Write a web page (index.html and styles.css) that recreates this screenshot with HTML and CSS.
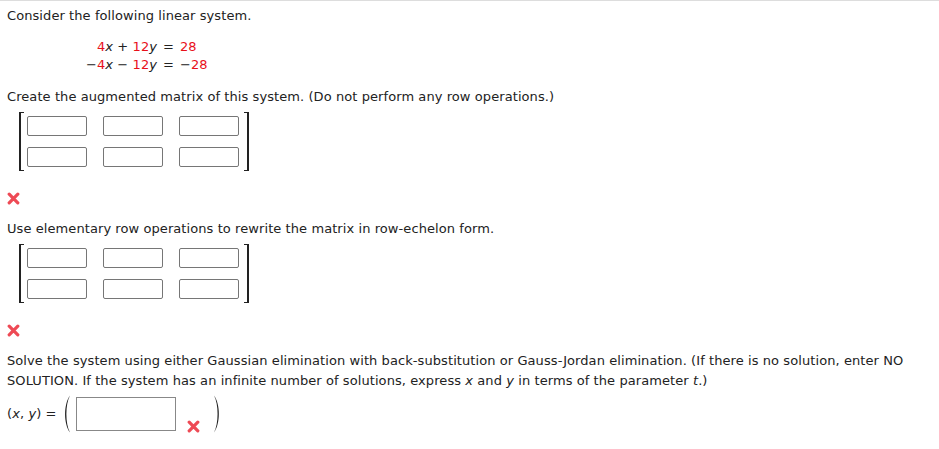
FILE: index.html
```html
<!DOCTYPE html>
<html lang="en">

<head>
    <meta charset="UTF-8">
    <meta name="viewport" content="width=device-width, initial-scale=1.0">
    <title>Linear system</title>
    <link rel="stylesheet" href="styles.css">
</head>

<body>
    <div class="question">
        <p class="intro">Consider the following linear system.</p>

        <table class="system">
            <tr>
                <td class="lhs"><span class="num">4</span><i>x</i> + <span class="num">12</span><i>y</i></td>
                <td class="eq">=</td>
                <td class="rhs"><span class="num">28</span></td>
            </tr>
            <tr>
                <td class="lhs">&minus;<span class="num">4</span><i>x</i> &minus; <span class="num">12</span><i>y</i></td>
                <td class="eq">=</td>
                <td class="rhs">&minus;<span class="num">28</span></td>
            </tr>
        </table>

        <p class="part">Create the augmented matrix of this system. (Do not perform any row operations.)</p>
        <div class="matrix">
            <span class="bracket left"></span>
            <div class="cells">
                <input type="text"><input type="text"><input type="text">
                <input type="text"><input type="text"><input type="text">
            </div>
            <span class="bracket right"></span>
        </div>
        <div class="mark">
            <svg width="13" height="13" viewBox="0 0 13 13"><path d="M2.2 2.2 L10.8 10.8 M10.8 2.2 L2.2 10.8" /></svg>
        </div>

        <p class="part">Use elementary row operations to rewrite the matrix in row-echelon form.</p>
        <div class="matrix">
            <span class="bracket left"></span>
            <div class="cells">
                <input type="text"><input type="text"><input type="text">
                <input type="text"><input type="text"><input type="text">
            </div>
            <span class="bracket right"></span>
        </div>
        <div class="mark">
            <svg width="13" height="13" viewBox="0 0 13 13"><path d="M2.2 2.2 L10.8 10.8 M10.8 2.2 L2.2 10.8" /></svg>
        </div>

        <p class="part solve">Solve the system using either Gaussian elimination with back-substitution or Gauss-Jordan elimination. (If there is no solution, enter NO SOLUTION. If the system has an infinite number of solutions, express <i>x</i> and <i>y</i> in terms of the parameter <i>t</i>.)</p>
        <div class="answer">
            <span class="label">(<i>x</i>, <i>y</i>) =</span>
            <svg class="paren" width="8" height="38" viewBox="0 0 8 38"><path d="M7 0.5 C0.5 9 0.5 29 7 37.5 C2.2 29 2.2 9 7 0.5 Z" /></svg>
            <input type="text" class="wide">
            <svg class="small-mark" width="13" height="13" viewBox="0 0 13 13"><path d="M2.2 2.2 L10.8 10.8 M10.8 2.2 L2.2 10.8" /></svg>
            <svg class="paren" width="8" height="38" viewBox="0 0 8 38"><path d="M1 0.5 C7.5 9 7.5 29 1 37.5 C5.8 29 5.8 9 1 0.5 Z" /></svg>
        </div>
    </div>
</body>

</html>
```

FILE: styles.css
```css
body {
    margin: 0;
    font-family: 'DejaVu Sans', Verdana, sans-serif;
    font-size: 13px;
    letter-spacing: 0.08px;
    line-height: 20px;
    color: #222;
    background-color: #fff;
    border-top: 1px solid #ddd;
}

.question {
    padding: 0 7px;
}

p {
    margin: 0;
}

.intro {
    margin-top: 5px;
}

/* the two equations */
.system {
    margin: 12px 0 0 79px;
    border-collapse: collapse;
}

.system td {
    padding: 0;
    line-height: 18px;
    white-space: nowrap;
}

.system .lhs {
    text-align: right;
}

.system .eq {
    padding: 0 6px 0 6px;
    text-align: center;
}

.system .rhs {
    text-align: left;
}

.num {
    color: #e8101a;
}

.part {
    margin-top: 13px;
}

.matrix {
    display: flex;
    margin: 5px 0 0 12px;
}

.bracket {
    width: 3px;
    border-top: 1px solid #222;
    border-bottom: 1px solid #222;
}

.bracket.left {
    border-left: 2px solid #222;
}

.bracket.right {
    border-right: 2px solid #222;
}

.cells {
    display: grid;
    grid-template-columns: repeat(3, 60px);
    column-gap: 16px;
    row-gap: 11px;
    padding: 4px 5px 4px 3px;
}

input {
    box-sizing: border-box;
    width: 60px;
    height: 20px;
    margin: 0;
    border: 1px solid #767676;
    border-radius: 2px;
    background: #fff;
    font: inherit;
}

.mark {
    margin-top: 21px;
    height: 13px;
    line-height: 0;
}

svg path {
    fill: none;
}

.mark path,
.small-mark path {
    stroke: #ee4a55;
    stroke-width: 3.2;
    stroke-linecap: round;
}

.mark + .part {
    margin-top: 14px;
}

.answer {
    display: flex;
    align-items: center;
    margin-top: 4px;
}

.answer .label {
    margin-right: 6px;
}

.paren path {
    fill: #222;
}

.answer .wide {
    width: 100px;
    height: 34px;
    margin-left: 5px;
    border-radius: 0;
    border-color: #888;
}

.small-mark {
    align-self: flex-end;
    margin: 0 13px 0 11px;
}
```
